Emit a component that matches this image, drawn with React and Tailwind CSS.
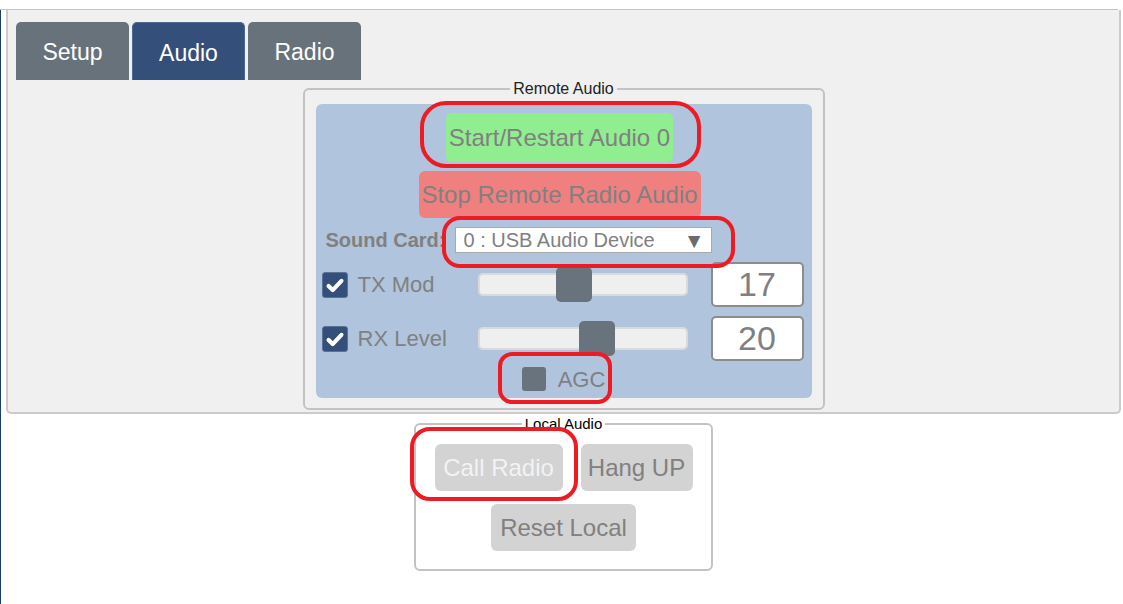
import React from 'react';

const Check = () => (
  <svg viewBox="0 0 26 26" className="w-[26px] h-[26px]" fill="none" stroke="white" strokeWidth={4.5} strokeLinecap="round" strokeLinejoin="round">
    <path d="M6 14l4.5 4.5L20 8.5" />
  </svg>
);

const LevelRow = ({ label, value, thumb }) => (
  <div className="flex items-center h-[45px] pl-[6px]">
    <div className="w-[26px] h-[26px] rounded-[3px] bg-[#34507a] border border-[#5a7296] flex items-center justify-center overflow-hidden">
      <Check />
    </div>
    <span className="ml-[10px] w-[120px] text-[22px] text-[#808080]">{label}</span>
    <div className="relative w-[210px] h-[23px] rounded-[5px] bg-[#efefef] border-2 border-[#dadada]">
      <div className="absolute top-[-8px] w-[36px] h-[35px] rounded-[5px] bg-[#68737e]" style={{ left: thumb }} />
    </div>
    <div className="ml-[23px] w-[93px] h-[45px] rounded-[5px] border-2 border-[#8c8c8c] bg-white flex items-center justify-center text-[34px] text-[#808080]">
      {value}
    </div>
  </div>
);

export default function App() {
  const tabs = [
    { name: 'Setup', active: false },
    { name: 'Audio', active: true },
    { name: 'Radio', active: false }
  ];

  return (
    <div className="relative w-[1123px] h-[604px] bg-white overflow-hidden font-['Liberation_Sans',Arial,sans-serif]">
      <div className="h-[9px]" />
      <div className="h-px bg-[#c4c4c4] mr-[5px]" />
      <div className="flex h-[594px]">
        <div className="w-px bg-[#1b3f5e]" />
        <div className="flex-1 ml-[5px] mr-[2px]">
          {/* main panel */}
          <div className="h-[404px] bg-[#f0f0f0] border-x-2 border-b-2 border-[#cbcbcb] rounded-b-[5px] pt-[12px] px-[8px]">
            <div className="flex gap-[3px]">
              {tabs.map(tab => (
                <div
                  key={tab.name}
                  className={
                    tab.active
                      ? 'w-[113px] h-[58px] pt-[3px] rounded-t-[5px] bg-[#34507a] border border-b-0 border-[#4d6a93] flex items-center justify-center text-[23px] text-white'
                      : 'w-[113px] h-[58px] pt-[3px] rounded-t-[5px] bg-[#68727b] flex items-center justify-center text-[23px] text-white'
                  }
                >
                  {tab.name}
                </div>
              ))}
            </div>

            <fieldset className="mx-auto w-[521px] border-2 border-[#c3c3c3] rounded-[6px] px-[11px] pb-[10px] pt-[6px]">
              <legend className="mx-auto px-[3px] text-[16px] leading-[18px] text-[#222]">Remote Audio</legend>
              <div className="h-[294px] bg-[#b0c4de] rounded-[6px] pt-[9px] pr-[8px] flex flex-col">
                <div className="flex justify-center">
                  <div className="w-[227px] h-[49px] rounded-[6px] bg-[#90ee90] flex items-center justify-center text-[24px] text-[#808080] whitespace-nowrap">
                    Start/Restart Audio 0
                  </div>
                </div>
                <div className="flex justify-center mt-[9px]">
                  <div className="w-[282px] h-[47px] rounded-[6px] bg-[#f08080] flex items-center justify-center text-[24px] text-[#808080] whitespace-nowrap">
                    Stop Remote Radio Audio
                  </div>
                </div>
                <div className="flex items-center mt-[9px] h-[26px] pl-[10px]">
                  <span className="w-[129px] whitespace-nowrap text-[20px] font-bold text-[#808080]">Sound Card:</span>
                  <div className="w-[257px] h-[26px] bg-white border border-[#a9a9a9] flex items-center justify-between pl-[8px] pr-[6px] text-[20px] text-[#808080]">
                    <span>0 : USB Audio Device</span>
                    <span className="text-[21px] leading-none text-[#6b6b6b]">▼</span>
                  </div>
                </div>
                <div className="mt-[9px]">
                  <LevelRow label="TX Mod" value="17" thumb={76} />
                </div>
                <div className="mt-[9px]">
                  <LevelRow label="RX Level" value="20" thumb={99} />
                </div>
                <div className="flex items-center justify-center mt-[6px] h-[24px] pl-[8px]">
                  <div className="w-[24px] h-[24px] rounded-[3px] bg-[#68737e]" />
                  <span className="ml-[12px] text-[22px] text-[#808080]">AGC</span>
                </div>
              </div>
            </fieldset>
          </div>

          {/* local audio */}
          <fieldset className="mx-auto mt-[1px] w-[299px] border-2 border-[#c3c3c3] rounded-[6px] pt-[12px] pb-[18px]">
            <legend className="mx-auto px-[3px] text-[15px] leading-[17px] text-black">Local Audio</legend>
            <div className="flex justify-center gap-[18px]">
              <div className="w-[128px] h-[47px] rounded-[6px] bg-[#d3d3d3] flex items-center justify-center text-[24px] text-[#f2f2f2]">Call Radio</div>
              <div className="w-[112px] h-[47px] rounded-[6px] bg-[#d3d3d3] flex items-center justify-center text-[24px] text-[#808080]">Hang UP</div>
            </div>
            <div className="flex justify-center mt-[13px]">
              <div className="w-[145px] h-[47px] rounded-[6px] bg-[#d3d3d3] flex items-center justify-center text-[24px] text-[#808080]">Reset Local</div>
            </div>
          </fieldset>
        </div>
      </div>

      {/* red annotation marks */}
      <div className="absolute left-[420px] top-[101px] w-[281px] h-[67px] border-4 border-[#ed1c24] rounded-[26px]" />
      <div className="absolute left-[442px] top-[216px] w-[293px] h-[52px] border-4 border-[#ed1c24] rounded-[18px]" />
      <div className="absolute left-[498px] top-[352px] w-[114px] h-[52px] border-4 border-[#ed1c24] rounded-[14px]" />
      <div className="absolute left-[410px] top-[427px] w-[168px] h-[74px] border-4 border-[#ed1c24] rounded-[20px]" />
    </div>
  );
}
